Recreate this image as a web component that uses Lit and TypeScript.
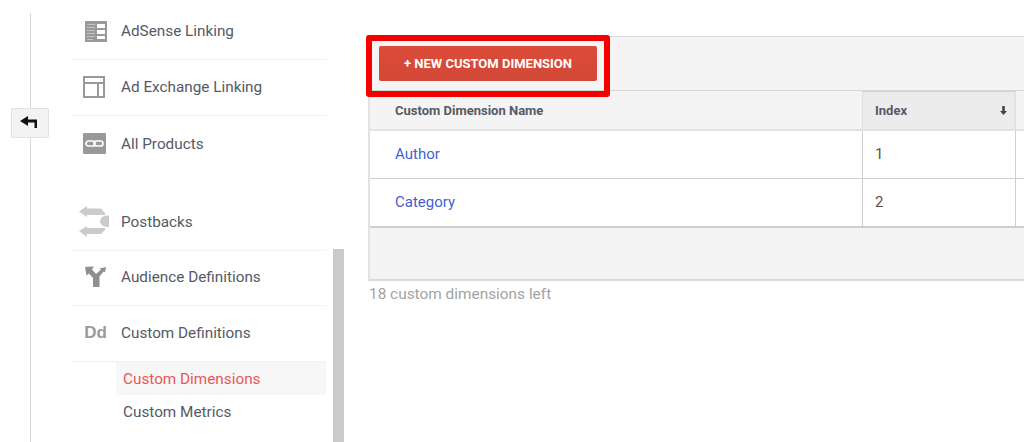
import { LitElement, html, css, svg } from "lit";
import { customElement } from "lit/decorators.js";

const icons = {
  adsense: svg`<svg width="22" height="21" viewBox="0 0 22 21"><rect width="22" height="21" fill="#999"/><g fill="#fff"><rect x="12" y="3" width="8" height="4"/><rect x="12" y="9" width="8" height="4"/><rect x="12" y="15" width="8" height="3"/></g><g fill="#c4c4c4"><rect x="2" y="3" width="8" height="1"/><rect x="2" y="6" width="8" height="1"/><rect x="2" y="9" width="8" height="1"/><rect x="2" y="12" width="8" height="1"/><rect x="2" y="15" width="8" height="1"/><rect x="2" y="18" width="6" height="1"/></g></svg>`,
  adx: svg`<svg width="22" height="22" viewBox="0 0 22 22"><rect x="1" y="1" width="20" height="20" fill="#fff" stroke="#999" stroke-width="2"/><path d="M1 7H21M15 7V21" stroke="#999" stroke-width="2" fill="none"/></svg>`,
  link: svg`<svg width="23" height="21" viewBox="0 0 23 21"><rect width="23" height="21" rx="1" fill="#999"/><g fill="none" stroke="#fff" stroke-width="1.7"><rect x="3" y="8" width="9" height="5" rx="2.500"/><rect x="11" y="8" width="9" height="5" rx="2.500"/></g></svg>`,
  post: svg`<svg width="30" height="31" viewBox="0 0 30 31"><g fill="#cbcbcb"><path d="M0 5.500L8 0V2.500H22L26 7V9H8V11Z"/><path d="M0 25L8 20V22H26V24L22 28H8V31Z"/><path d="M30 9.500V21H28C24 21 21 18 21 15C21 12 24 9.500 28 9.500Z"/></g></svg>`,
  aud: svg`<svg width="22" height="22" viewBox="0 0 22 22"><path d="M0 1L9 0.500L7 3.500L11 8L16 3.500L14.500 2.500L21 1L20 6.500L18.500 5.500L14.500 10.500V21H8V12L4 7.500L1.500 9.500Z" fill="#8f8f8f"/></svg>`,
};

@customElement("app-root")
export class AppRoot extends LitElement {
  static styles = css`
    :host { display: block; width: 1024px; height: 442px; overflow: hidden; position: relative; background: #fff; font-family: Roboto, "Liberation Sans", sans-serif; color: #555a66; }
    .page { display: flex; height: 442px; }
    .rail { width: 72px; flex: none; position: relative; padding-top: 13px; box-sizing: border-box; }
    .line { width: 1px; height: 100%; margin-left: 30px; background: #d8d8d8; }
    .back { position: absolute; left: 11px; top: 108px; width: 38px; height: 30px; box-sizing: border-box; background: #f3f3f3; border: 1px solid #e2e2e2; border-radius: 2px; display: flex; align-items: center; justify-content: center; }
    .back svg { margin: 0 3px 3px 0; }
    .nav { width: 254px; flex: none; }
    .row { display: flex; align-items: center; font-size: 15.300px; border-bottom: 1px solid #f2f2f2; box-sizing: border-box; }
    .row.plain { border-bottom: 0; }
    .ico { width: 45px; margin-right: 4px; flex: none; display: flex; justify-content: center; }
    .ico.n1 { margin-left: 1px; margin-right: 3px; }
    .ico.back1 { margin-left: -1px; margin-right: 5px; }
    .dd { font-family: "Liberation Sans", sans-serif; font-weight: 700; font-size: 17px; color: #9a9a9a; letter-spacing: -0.200px; }
    .sub { margin-left: 44px; padding-left: 7px; display: flex; align-items: center; font-size: 15.300px; height: 34px; }
    .sub.on { background: #f7f7f7; color: #e8585a; height: 33px; }
    .scrollcol { width: 18px; flex: none; display: flex; flex-direction: column; padding: 249px 0 0 7px; box-sizing: border-box; }
    .bar { flex: 1; width: 11px; background: #cacaca; }
    .main { flex: 1; min-width: 0; padding: 36px 0 0 24px; }
    .panel { border: 1px solid #dadada; border-width: 1px 0 2px 2px; border-left-color: #e2e2e2; background: #f4f4f4; }
    .toolbar { height: 54px; display: flex; align-items: flex-start; padding: 9px 0 0 9px; box-sizing: border-box; border-bottom: 1px solid #d6d6d6; position: relative; }
    .btn { width: 218px; height: 35px; border-radius: 2px; background: linear-gradient(#dd4b39, #d14836); color: #fff; font: 700 13px Roboto, sans-serif; display: flex; align-items: center; justify-content: center; }
    .hi { position: absolute; left: -4px; top: -2px; width: 244px; height: 62px; box-sizing: border-box; border: 6px solid #f40000; border-radius: 3px; }
    .grid { display: grid; grid-template-columns: 492px 154px 1fr; background: #fff; }
    .head { height: 40px; display: flex; align-items: center; font-size: 13px; font-weight: 700; background: #f4f4f4; border-bottom: 2px solid #e2e2e2; box-sizing: border-box; }
    .first { padding-left: 25px; }
    .idx { background: #ececec; padding: 0 7px 0 12px; justify-content: space-between; border-left: 1px solid #e2e2e2; border-right: 2px solid #e2e2e2; border-top: 1px solid #d0d0d0; color: #545b6b; }
    .cell { display: flex; align-items: center; height: 48px; padding-bottom: 2px; box-sizing: border-box; font-size: 15px; border-bottom: 1px solid #cfcfcf; }
    .cell.name { padding-left: 25px; color: #3f62cf; }
    .cell.num { padding-left: 12px; border-left: 1px solid #cfcfcf; border-right: 1px solid #cfcfcf; color: #6b4b44; }
    .foot { height: 51px; border-top: 1px solid #cfcfcf; }
    .left { margin: 4px 0 0 1px; font-size: 15.400px; color: #a3a3a3; }
    .p1 { padding-bottom: 1px; }
    .p2 { padding-bottom: 2px; }
    .t3 { padding-top: 3px; height: 60px; }
    .h56 { height: 56px; }
    .h55 { height: 55px; }
    .post { height: 79px; padding-top: 21px; }
    .aud { padding-bottom: 2px; }
    .cd { padding-bottom: 2px; }
  `;

  render() {
    return html`<div class="page">
      <div class="rail">
        <div class="line"></div>
        <div class="back"><svg width="17" height="12" viewBox="0 0 17 12"><path d="M0 5L8 0V3.500H17V12H14.500V6.500H8V10Z" fill="#111"/></svg></div>
      </div>
      <div class="nav">
        <div class="row t3"><div class="ico n1">${icons.adsense}</div><span>AdSense Linking</span></div>
        <div class="row h56 p2"><div class="ico back1">${icons.adx}</div><span>Ad Exchange Linking</span></div>
        <div class="row plain h56 p1"><div class="ico">${icons.link}</div><span>All Products</span></div>
        <div class="row post"><div class="ico back1">${icons.post}</div><span>Postbacks</span></div>
        <div class="row h55 aud"><div class="ico n1">${icons.aud}</div><span>Audience Definitions</span></div>
        <div class="row h56 cd"><div class="ico n1"><span class="dd">Dd</span></div><span>Custom Definitions</span></div>
        <div class="sub on">Custom Dimensions</div>
        <div class="sub">Custom Metrics</div>
      </div>
      <div class="scrollcol"><div class="bar"></div></div>
      <div class="main">
        <div class="panel">
          <div class="toolbar">
            <div class="btn">+ NEW CUSTOM DIMENSION</div>
            <div class="hi"></div>
          </div>
          <div class="grid">
            <div class="head first">Custom Dimension Name</div>
            <div class="head idx"><span>Index</span><svg width="7" height="9" viewBox="0 0 7 9"><path d="M2.200 0H4.800V5H7L3.500 9L0 5H2.200Z" fill="#444"/></svg></div>
            <div class="head"></div>
            <div class="cell name">Author</div><div class="cell num">1</div><div class="cell"></div>
            <div class="cell name">Category</div><div class="cell num">2</div><div class="cell"></div>
          </div>
          <div class="foot"></div>
        </div>
        <div class="left">18 custom dimensions left</div>
      </div>
    </div>`;
  }
}
